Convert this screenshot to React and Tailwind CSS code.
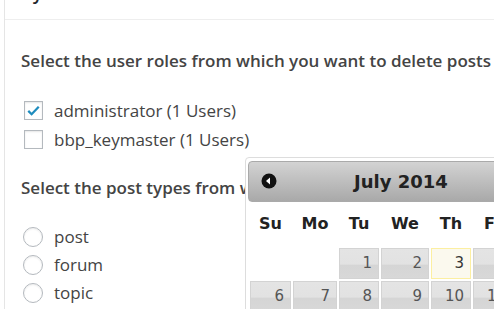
import React from 'react';

const roles = [
    { name: 'administrator (1 Users)', checked: true },
    { name: 'bbp_keymaster (1 Users)', checked: false },
];

const postTypes = ['post', 'forum', 'topic'];

const dayNames = ['Su', 'Mo', 'Tu', 'We', 'Th', 'Fr', 'Sa'];

const weeks = [
    [null, null, 1, 2, 3, 4, 5],
    [6, 7, 8, 9, 10, 11, 12],
];

const Checkbox = ({ checked }) => (
    <span className="w-[19px] h-[19px] ml-[3px] border border-[#b4b9be] bg-white shadow-[inset_0_1px_2px_rgba(0,0,0,0.1)] flex items-center justify-center">
        {checked && (
            <svg className="w-[15px] h-[15px]" viewBox="0 0 20 20">
                <path d="M3 10.5l4.5 4.5L17 5" fill="none" stroke="#1e8cbe" strokeWidth="3" />
            </svg>
        )}
    </span>
);

const Radio = () => (
    <span className="w-[20px] h-[20px] ml-[2px] rounded-full border border-[#b4b9be] bg-white shadow-[inset_0_1px_2px_rgba(0,0,0,0.08)]" />
);

const DatePicker = () => (
    <div className="absolute left-[245px] top-[157px] w-[312px] bg-white border border-[#dddddd] rounded-[4px] p-[2px] font-['DejaVu_Sans',sans-serif]">
        <div className="relative h-[41px] mt-[1px] rounded-[4px] border border-[#aaaaaa] bg-gradient-to-b from-[#d3d3d3] to-[#a9a9a9] flex items-center justify-center">
            <svg className="absolute left-[12px] top-[11px] w-[16px] h-[16px]" viewBox="0 0 16 16">
                <circle cx="8" cy="8" r="7.5" fill="#111" />
                <path d="M5 8l4-3.5v7z" fill="#fff" />
            </svg>
            <span className="text-[18px] font-bold text-[#222]">July 2014</span>
        </div>
        <div className="grid grid-cols-[41px_44px_40px_48px_40px_40px_41px] gap-x-[2px] gap-y-[2px] ml-[2px]">
            {dayNames.map((d) => (
                <div key={d} className="h-[44px] flex items-center justify-center text-[16px] font-bold text-[#222]">
                    {d}
                </div>
            ))}
            {weeks.flat().map((day, i) => {
                if (day === null) return <div key={i} className="h-[31px]" />;
                const today = day === 3;
                return (
                    <div
                        key={i}
                        className={
                            today
                                ? 'h-[31px] border border-[#fcefa1] bg-[#fbf9ee] text-[#363636] text-[15px] flex items-center justify-end pr-[6px]'
                                : 'h-[31px] border border-[#d3d3d3] bg-[linear-gradient(to_bottom,#e4e4e4_0%,#e2e2e2_52%,#d5d5d5_56%,#d8d8d8_100%)] text-[#555] text-[15px] flex items-center justify-end pr-[6px]'
                        }
                    >
                        {day}
                    </div>
                );
            })}
        </div>
    </div>
);

const App = () => {
    return (
        <div className="relative w-[494px] h-[309px] overflow-hidden bg-white font-['Open_Sans',sans-serif] text-[#444]">
            <div className="ml-[4px] h-full border-l border-[#e5e5e5]">
                <div className="h-[20px] overflow-hidden border-b border-[#eeeeee]">
                    <h3 className="-mt-[17px] pl-[16px] text-[18px] leading-[20px] font-semibold text-[#23282d]">By User Role</h3>
                </div>

                <div className="pl-[16px]">
                    <p className="mt-[30px] text-[17px] leading-[22px] font-semibold whitespace-nowrap">
                        Select the user roles from which you want to delete posts
                    </p>

                    <div className="mt-[24px]">
                        {roles.map((r) => (
                            <label key={r.name} className="h-[29px] flex items-center gap-[11px] text-[17px] whitespace-nowrap">
                                <Checkbox checked={r.checked} />
                                {r.name}
                            </label>
                        ))}
                    </div>

                    <p className="mt-[23px] text-[17px] leading-[22px] font-semibold whitespace-nowrap">
                        Select the post types from which you want to delete posts
                    </p>

                    <div className="mt-[24px]">
                        {postTypes.map((t) => (
                            <label key={t} className="h-[28px] flex items-center gap-[11px] text-[17px] whitespace-nowrap">
                                <Radio />
                                {t}
                            </label>
                        ))}
                    </div>
                </div>
            </div>

            <DatePicker />
        </div>
    );
};

export default App;
